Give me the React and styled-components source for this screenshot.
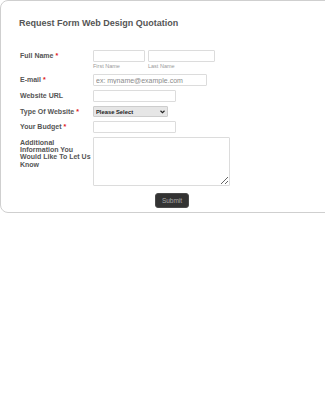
import React from "react";
import styled, { createGlobalStyle } from "styled-components";

const Global = createGlobalStyle`
  html, body { margin: 0; padding: 0; overflow: hidden; background: #fff; }
  body { font-family: "Liberation Sans", Arial, sans-serif; }
  * { box-sizing: border-box; }
`;

const Card = styled.form`
  width: 344px;
  border: 1px solid #cfcfcf;
  border-radius: 8px;
  padding: 18px 0 4px 19px;
  background: #fff;
  color: #555;
`;

const Title = styled.h1`
  margin: 0 0 22px -1px;
  font-size: 9px;
  line-height: 9px;
  font-weight: bold;
  color: #555;
`;

const Rows = styled.div`
  display: flex;
  flex-direction: column;
  gap: 4px;
`;

const Row = styled.div`
  display: flex;
  align-items: flex-start;
`;

const Label = styled.label`
  width: 73px;
  flex: none;
  padding-top: 1.5px;
  font-size: 7px;
  line-height: 7.4px;
  font-weight: bold;
  color: #555;
`;

const Star = styled.span`
  color: #e02020;
`;

const Pair = styled.div`
  display: flex;
  gap: 3px;
`;

const Sub = styled.div`
  display: flex;
  flex-direction: column;
`;

const SubLabel = styled.span`
  font-size: 5.5px;
  line-height: 8px;
  color: #9a9a9a;
`;

const Input = styled.input`
  display: block;
  width: ${(p) => p.$w}px;
  height: 12px;
  margin: 0;
  padding: 0 2px;
  border: 1px solid #dcdcdc;
  border-radius: 1px;
  background: #fff;
  font-family: "Liberation Sans", Arial, sans-serif;
  font-size: 7px;
  color: #555;
  outline: none;
  &::placeholder { color: #8a8a8a; }
`;

const SelectWrap = styled.div`
  position: relative;
  width: 75px;
  height: 11px;
`;

const Select = styled.select`
  display: block;
  appearance: none;
  width: 100%;
  height: 100%;
  margin: 0;
  padding: 0 0 0 2px;
  border: 1px solid #cdcdcd;
  border-radius: 1px;
  background: #e6e6e6;
  font-family: "Liberation Sans", Arial, sans-serif;
  font-size: 5.8px;
  font-weight: bold;
  color: #222;
  outline: none;
`;

const Chevron = styled.svg`
  position: absolute;
  right: 3px;
  top: 3.5px;
  width: 5px;
  height: 4px;
  pointer-events: none;
`;

const Area = styled.textarea`
  display: block;
  width: 137px;
  height: 49px;
  margin: 0;
  border: 1px solid #dcdcdc;
  border-radius: 1px;
  background: #fff;
  font-family: "Liberation Sans", Arial, sans-serif;
  font-size: 7px;
  outline: none;
`;

const ButtonRow = styled.div`
  display: flex;
  justify-content: center;
  margin: 7px 0 0 -19px;
`;

const Button = styled.button`
  width: 34px;
  height: 15px;
  padding: 0;
  border: 1px solid #4a4a4a;
  border-radius: 3px;
  background: #333;
  color: #aaa;
  font-family: "Liberation Sans", Arial, sans-serif;
  font-size: 6.5px;
  cursor: pointer;
`;

export default function App() {
  return (
    <>
      <Global />
      <Card onSubmit={(e) => e.preventDefault()}>
        <Title>Request Form Web Design Quotation</Title>
        <Rows>
          <Row>
            <Label>
              Full Name <Star>*</Star>
            </Label>
            <Pair>
              <Sub>
                <Input $w={52} />
                <SubLabel>First Name</SubLabel>
              </Sub>
              <Sub>
                <Input $w={67} />
                <SubLabel>Last Name</SubLabel>
              </Sub>
            </Pair>
          </Row>
          <Row>
            <Label>
              E-mail <Star>*</Star>
            </Label>
            <Input $w={114} placeholder="ex: myname@example.com" />
          </Row>
          <Row>
            <Label>Website URL</Label>
            <Input $w={83} />
          </Row>
          <Row>
            <Label>
              Type Of Website <Star>*</Star>
            </Label>
            <SelectWrap>
              <Select defaultValue="">
                <option value="">Please Select</option>
              </Select>
              <Chevron viewBox="0 0 10 8">
                <path d="M1 1.5 L5 5.5 L9 1.5" fill="none" stroke="#222" strokeWidth="2.2" />
              </Chevron>
            </SelectWrap>
          </Row>
          <Row>
            <Label>
              Your Budget <Star>*</Star>
            </Label>
            <Input $w={83} />
          </Row>
          <Row>
            <Label>Additional Information You Would Like To Let Us Know</Label>
            <Area />
          </Row>
        </Rows>
        <ButtonRow>
          <Button type="submit">Submit</Button>
        </ButtonRow>
      </Card>
    </>
  );
}
